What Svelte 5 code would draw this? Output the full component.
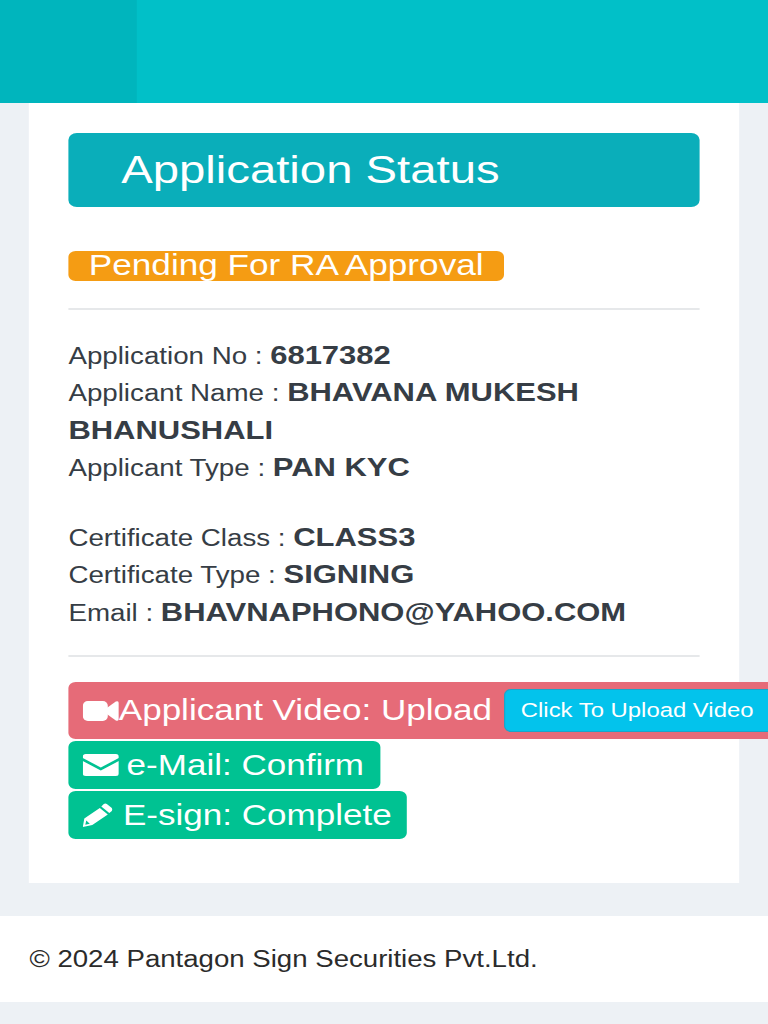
<script>
  let details = [
    { label: "Application No", value: "6817382" },
    { label: "Applicant Name", value: "BHAVANA MUKESH BHANUSHALI" },
    { label: "Applicant Type", value: "PAN KYC" },
  ];
  let certificate = [
    { label: "Certificate Class", value: "CLASS3" },
    { label: "Certificate Type", value: "SIGNING" },
    { label: "Email", value: "BHAVNAPHONO@YAHOO.COM" },
  ];
</script>

<div class="page">
  <header>
    <div class="brand"></div>
  </header>

  <main>
    <section class="card">
      <h1>Application Status</h1>

      <div class="status"><span class="pill">Pending For RA Approval</span></div>
      <hr />

      <div class="info">
        {#each details as row}
          <div>{row.label} : <b>{row.value}</b></div>
        {/each}
        <div class="spacer"></div>
        {#each certificate as row}
          <div>{row.label} : <b>{row.value}</b></div>
        {/each}
      </div>
      <hr class="second" />

      <div class="steps">
        <div class="step red">
          <svg class="video" viewBox="0 0 36 20" preserveAspectRatio="none" aria-hidden="true">
            <rect x="0" y="0" width="25" height="20" rx="5" fill="#fff" />
            <path d="M24 7 L33 0.6 Q36 -0.5 36 2 V18 Q36 20.5 33 19.4 L24 13 Z" fill="#fff" />
          </svg>
          <span>Applicant Video: Upload</span>
          <button>Click To Upload Video</button>
        </div>
        <div class="step green">
          <svg class="mail" viewBox="0 0 36 22" preserveAspectRatio="none" aria-hidden="true">
            <path d="M0 2.5 Q0 0 3 0 H33 Q36 0 36 2.5 V4 L18 13.5 L0 4 Z" fill="#fff" />
            <path d="M0 7 L18 16.5 L36 7 V19.5 Q36 22 33 22 H3 Q0 22 0 19.5 Z" fill="#fff" />
          </svg>
          <span class="mail-text">e-Mail: Confirm</span>
        </div>
        <div class="step green">
          <svg class="pencil" viewBox="0 0 30 24" preserveAspectRatio="none" aria-hidden="true">
            <path d="M21 1 Q22.5 0 24 1 L29 5 Q30 6.5 29 8 L26.5 10 L18.5 3.5 Z" fill="#fff" />
            <path fill-rule="evenodd" d="M17 5 L25 11.5 L9.5 22 L0 24 L1.5 15.5 Z M3.5 17.5 L2.5 21.8 L7 20.8 Z" fill="#fff" />
          </svg>
          <span class="sign-text">E-sign: Complete</span>
        </div>
      </div>
    </section>
  </main>

  <footer>© 2024 Pantagon Sign Securities Pvt.Ltd.</footer>
</div>

<style>
  :global(body) {
    background: #edf1f5;
    font-family: "Liberation Sans", Arial, sans-serif;
    overflow: hidden;
  }

  /* the reference is a phone page stretched sideways, so lay out at 640 and widen */
  .page {
    width: 640px;
    height: 1024px;
    overflow: hidden;
    background: #edf1f5;
    transform: scaleX(1.2);
    transform-origin: left top;
  }

  header {
    height: 103px;
    background: #01c0c8;
  }

  .brand {
    width: 114px;
    height: 100%;
    background: #00b5bd;
  }

  main {
    padding: 0 24px 33px;
  }

  .card {
    background: #fff;
    padding: 30px 33px 44px;
    height: 780px;
    box-sizing: border-box;
  }

  h1 {
    margin: 0;
    height: 74px;
    line-height: 72px;
    padding-left: 44px;
    background: #0aaeba;
    border-radius: 7px;
    color: #fff;
    font-size: 39.4px;
    font-weight: 400;
  }

  .status {
    margin-top: 44px;
    height: 30px;
  }

  .pill {
    display: inline-block;
    height: 30px;
    line-height: 28px;
    padding: 0 17px;
    border-radius: 6px;
    background: #f59c13;
    color: #fff;
    font-size: 29.3px;
  }

  hr {
    border: 0;
    border-top: 2px solid #e6e8ea;
    margin: 27px 0 0;
  }

  .info {
    margin-top: 28px;
    color: #363d45;
    font-size: 23.1px;
    line-height: 37.3px;
  }

  .info b {
    font-size: 25.8px;
    line-height: 1;
  }

  .spacer {
    height: 33px;
  }

  .second {
    margin-top: 23px;
  }

  .steps {
    margin-top: 25px;
    display: flex;
    flex-direction: column;
    align-items: flex-start;
    gap: 2px;
  }

  .step {
    display: flex;
    align-items: center;
    border-radius: 6px;
    color: #fff;
    font-size: 29.2px;
    padding: 0 12px;
    box-sizing: border-box;
    height: 48px;
    white-space: nowrap;
  }

  .red {
    background: #e66b78;
    height: 57px;
    width: 600px;
  }

  .green {
    background: #00c292;
  }

  .video {
    width: 30px;
    height: 20px;
    flex: none;
  }

  .mail {
    width: 30px;
    height: 22px;
    flex: none;
  }

  .pencil {
    width: 25px;
    height: 24px;
    flex: none;
  }

  .mail-text {
    margin-left: 6.5px;
    margin-right: 1.5px;
  }

  .sign-text {
    margin-left: 8.5px;
    margin-right: 0.5px;
  }

  button {
    margin-left: 9.5px;
    height: 43px;
    width: 240px;
    padding: 0 0 0 13.5px;
    text-align: left;
    background: #03c3ec;
    border: 1px solid #1aa5c9;
    border-radius: 6px;
    color: #fff;
    font-family: inherit;
    font-size: 19.9px;
    flex: none;
  }

  footer {
    height: 86px;
    line-height: 86px;
    padding-left: 24.5px;
    background: #fff;
    color: #2b2b2b;
    font-size: 23px;
  }
</style>
